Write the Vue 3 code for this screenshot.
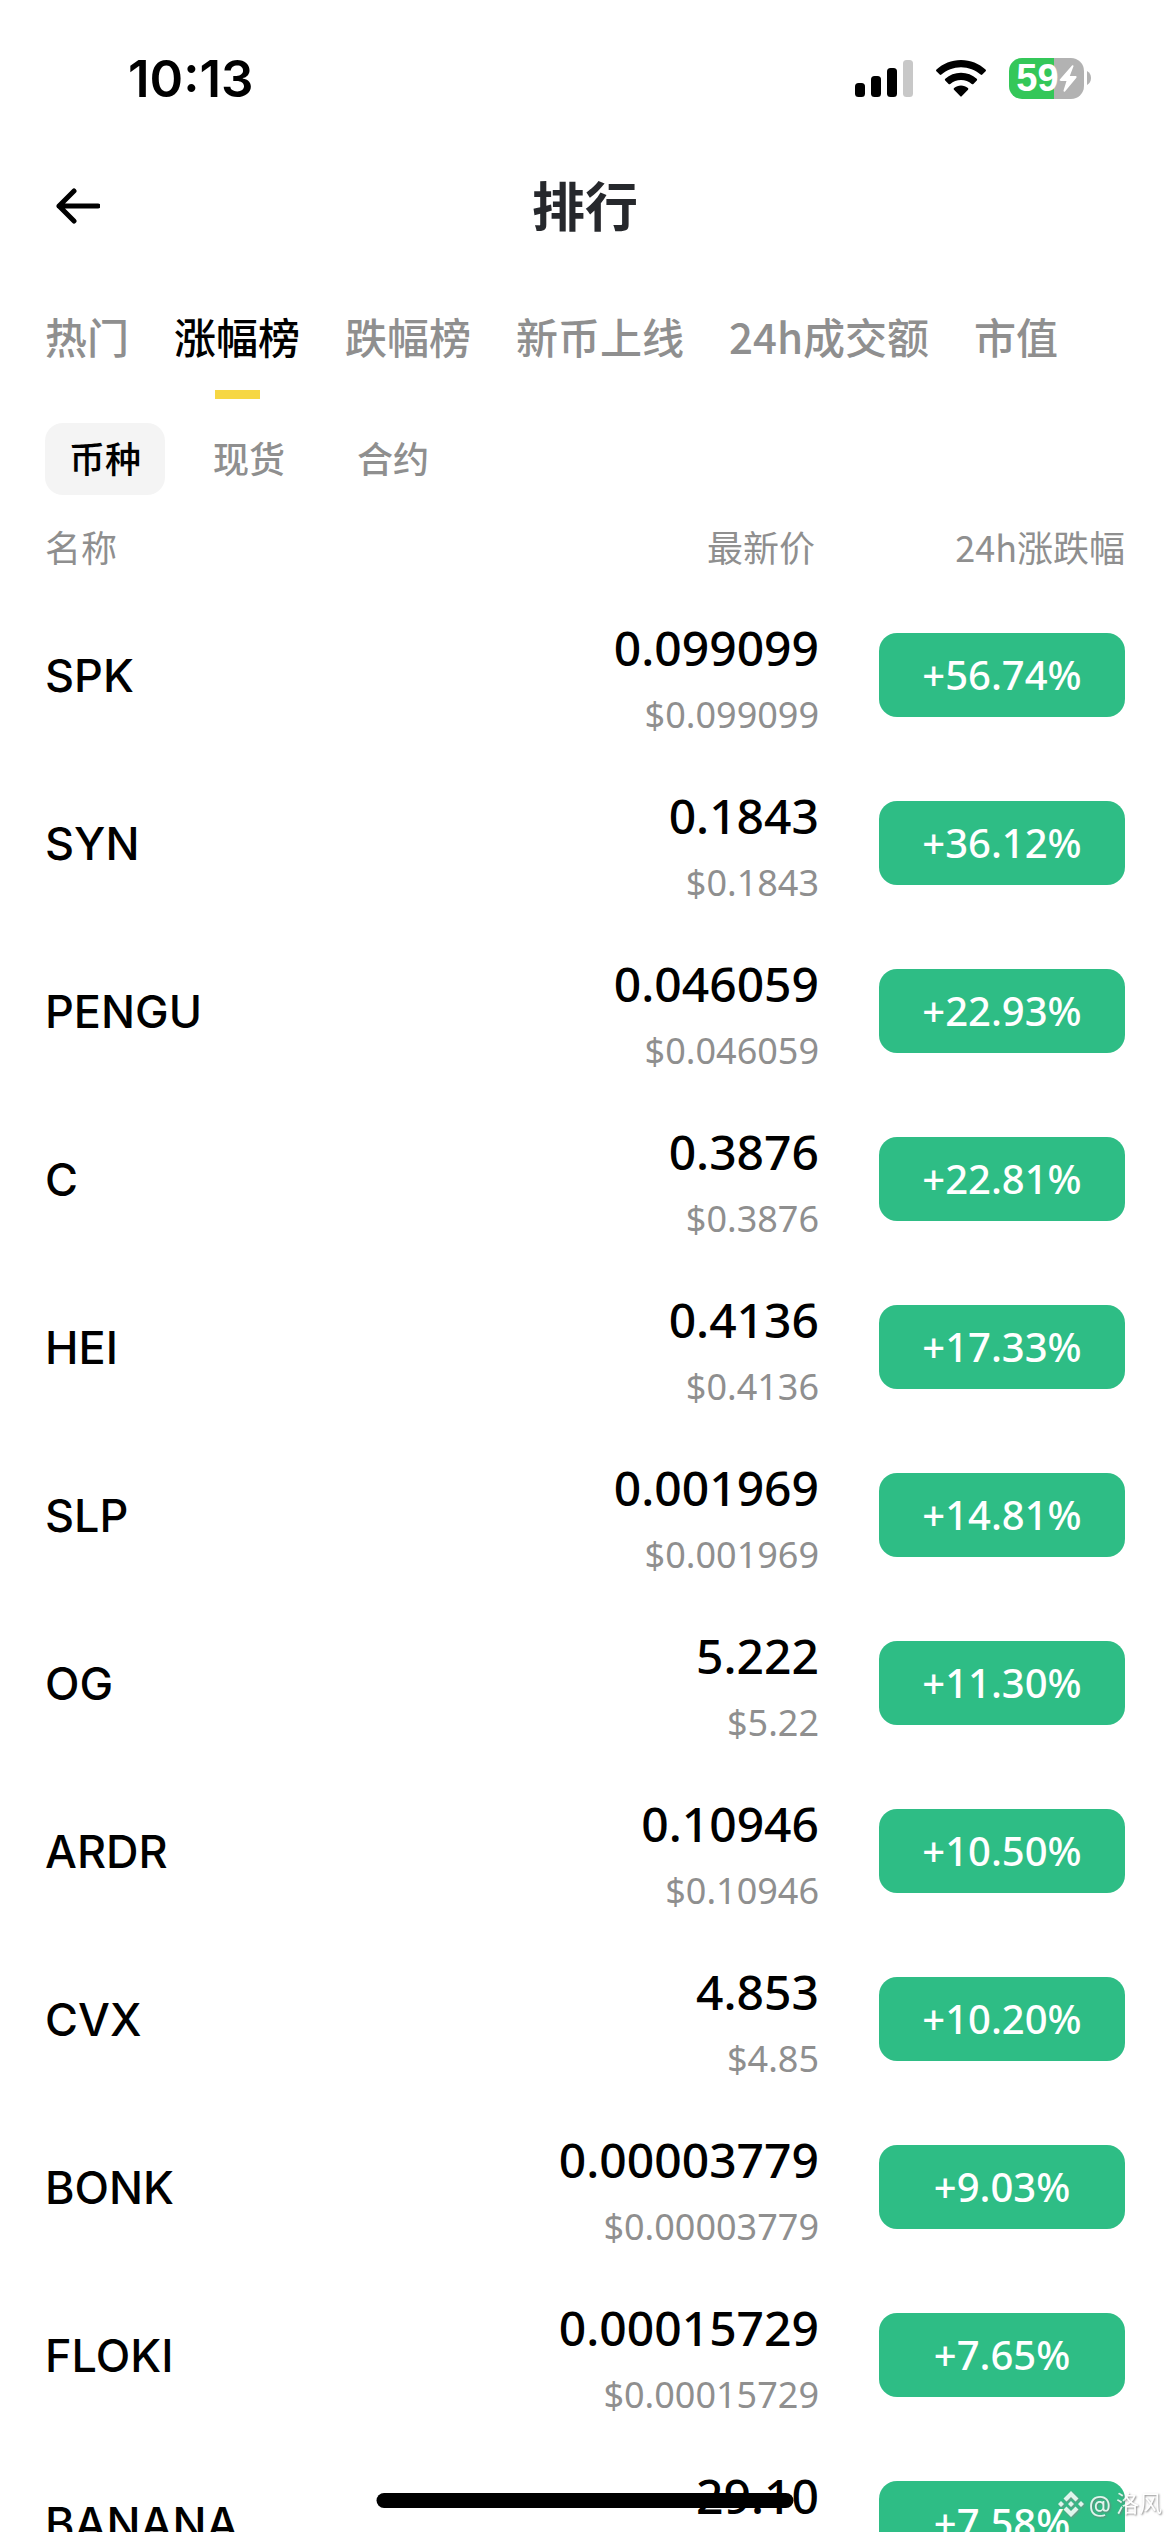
<script setup>
import { ref } from 'vue'

const tabs = ['热门', '涨幅榜', '跌幅榜', '新币上线', '24h成交额', '市值']
const activeTab = ref('涨幅榜')

const markets = ['币种', '现货', '合约']
const activeMarket = ref('币种')

const coins = [
  { name: 'SPK', price: '0.099099', usd: '$0.099099', change: '+56.74%' },
  { name: 'SYN', price: '0.1843', usd: '$0.1843', change: '+36.12%' },
  { name: 'PENGU', price: '0.046059', usd: '$0.046059', change: '+22.93%' },
  { name: 'C', price: '0.3876', usd: '$0.3876', change: '+22.81%' },
  { name: 'HEI', price: '0.4136', usd: '$0.4136', change: '+17.33%' },
  { name: 'SLP', price: '0.001969', usd: '$0.001969', change: '+14.81%' },
  { name: 'OG', price: '5.222', usd: '$5.22', change: '+11.30%' },
  { name: 'ARDR', price: '0.10946', usd: '$0.10946', change: '+10.50%' },
  { name: 'CVX', price: '4.853', usd: '$4.85', change: '+10.20%' },
  { name: 'BONK', price: '0.00003779', usd: '$0.00003779', change: '+9.03%' },
  { name: 'FLOKI', price: '0.00015729', usd: '$0.00015729', change: '+7.65%' },
  { name: 'BANANA', price: '29.10', usd: '$29.10', change: '+7.58%' },
]
</script>

<template>
  <div class="screen">
    <header class="status">
      <time class="clock">10:13</time>
      <div class="indicators">
        <svg class="signal" viewBox="0 0 58 37" aria-hidden="true">
          <rect x="0" y="23" width="10" height="14" rx="3.5" />
          <rect x="16" y="16" width="10" height="21" rx="3.5" />
          <rect x="32" y="8" width="10" height="29" rx="3.5" />
          <rect x="48" y="0" width="10" height="37" rx="3.5" fill="#c8c8c8" />
        </svg>
        <svg class="wifi" viewBox="0 0 50 37" aria-hidden="true">
          <path d="M25 0C15.500 0 6.900 3.600.500 9.500c-.6.600-.6 1.200-.1 1.800l3.300 3.300c.5.500 1.100.5 1.700 0C10.600 10 17.500 7.200 25 7.200S39.400 10 44.600 14.600c.6.500 1.200.5 1.700 0l3.300-3.300c.5-.6.5-1.200-.1-1.800C43.100 3.600 34.500 0 25 0Z" />
          <path d="M25 12.800c-6 0-11.500 2.200-15.700 5.900-.6.600-.6 1.200-.1 1.800l3.400 3.400c.5.500 1.100.5 1.700 0 2.900-2.500 6.600-4 10.700-4s7.800 1.500 10.700 4c.6.500 1.200.5 1.700 0l3.400-3.400c.5-.6.5-1.200-.1-1.800C36.500 15 31 12.800 25 12.800Z" />
          <path d="M25 25.500c-2.600 0-5 .9-6.900 2.500-.6.500-.6 1.200-.1 1.700l6.100 6.300c.6.700 1.200.7 1.800 0l6.100-6.300c.5-.5.5-1.200-.1-1.700-1.900-1.600-4.300-2.500-6.900-2.500Z" />
        </svg>
        <div class="battery">
          <div class="cell">
            <span class="level">59</span>
            <svg class="bolt" viewBox="0 0 18 27" aria-hidden="true">
              <path d="M13 .6 1 14.200c-.7.900-.3 1.800.8 1.800H7.500L4.600 25.300c-.4 1.300.7 1.900 1.600.9L17.200 13c.8-1 .3-1.900-.8-1.900h-5.600L14.400 1.600C14.900.4 13.900-.3 13 .6Z" fill="#fff" />
            </svg>
          </div>
          <svg class="nub" viewBox="0 0 4 14" aria-hidden="true">
            <path d="M0 0c2.500 1.300 4 4 4 7s-1.500 5.700-4 7Z" fill="#b2b2b2" />
          </svg>
        </div>
      </div>
    </header>

    <nav class="topbar">
      <button class="back" type="button" aria-label="返回">
        <svg viewBox="0 0 44 36" aria-hidden="true">
          <path d="M42 18H3M18 3 3 18l15 15" />
        </svg>
      </button>
      <h1>排行</h1>
    </nav>

    <div class="tabs" role="tablist">
      <button
        v-for="tab in tabs"
        :key="tab"
        type="button"
        role="tab"
        class="tab"
        :class="{ active: tab === activeTab }"
        :aria-selected="tab === activeTab"
        @click="activeTab = tab"
      >
        {{ tab }}
      </button>
    </div>

    <div class="chips">
      <button
        v-for="market in markets"
        :key="market"
        type="button"
        class="chip"
        :class="{ active: market === activeMarket }"
        @click="activeMarket = market"
      >
        {{ market }}
      </button>
    </div>

    <main class="list">
      <table>
        <thead>
          <tr>
            <th class="name" scope="col">名称</th>
            <th class="price" scope="col">最新价</th>
            <th class="change" scope="col">24h涨跌幅</th>
          </tr>
        </thead>
        <tbody>
          <tr v-for="coin in coins" :key="coin.name">
            <td class="name">{{ coin.name }}</td>
            <td class="price">
              <div class="last">{{ coin.price }}</div>
              <div class="usd">{{ coin.usd }}</div>
            </td>
            <td class="change"><span class="badge">{{ coin.change }}</span></td>
          </tr>
        </tbody>
      </table>
    </main>

    <div class="home-bar"></div>
    <div class="watermark">
      <svg viewBox="0 0 26 26" aria-hidden="true">
        <path d="m13 0 7.500 7.500-3 3L13 6l-4.500 4.500-3-3ZM3 10l3 3-3 3-3-3Zm10 0 3 3-3 3-3-3Zm10 0 3 3-3 3-3-3ZM8.500 15.500 13 20l4.500-4.500 3 3L13 26l-7.500-7.500Z" />
      </svg>
      <span>@</span>
      <span>洛风</span>
    </div>
  </div>
</template>

<style>
body {
  margin: 0;
  background: #fff;
}
</style>

<style scoped>
.screen {
  position: relative;
  display: flex;
  flex-direction: column;
  height: 100vh;
  overflow: hidden;
  background: #fff;
  color: #000;
  font-family: Inter, 'Noto Sans CJK SC', sans-serif;
}

button {
  padding: 0;
  border: 0;
  background: none;
  color: inherit;
  font: inherit;
  white-space: nowrap;
}

.status {
  display: flex;
  flex: none;
  align-items: center;
  justify-content: space-between;
  height: 156px;
  padding: 0 79px 0 128px;
}

.clock {
  font-size: 51px;
  font-weight: 600;
}

.indicators {
  display: flex;
  align-items: center;
  gap: 23px;
}

.signal {
  width: 58px;
  height: 37px;
}

.wifi {
  width: 50px;
  height: 37px;
}

.battery {
  display: flex;
  align-items: center;
  gap: 3px;
}

.cell {
  display: flex;
  align-items: center;
  justify-content: center;
  width: 75px;
  height: 41px;
  border-radius: 13px;
  background: linear-gradient(90deg, #34c759 60%, #b2b2b2 60%);
}

.level {
  color: #fff;
  font-family: 'Liberation Sans', sans-serif;
  font-size: 38px;
  font-weight: 700;
  line-height: 41px;
}

.bolt {
  width: 18px;
  height: 27px;
}

.nub {
  width: 4px;
  height: 14px;
}

.topbar {
  display: grid;
  flex: none;
  grid-template-columns: 1fr auto 1fr;
  align-items: center;
  height: 100px;
  padding: 0 56px;
}

.back {
  display: flex;
  width: 44px;
}

.back svg {
  width: 44px;
  height: 36px;
  fill: none;
  stroke: #000;
  stroke-width: 5;
  stroke-linecap: round;
  stroke-linejoin: round;
}

h1 {
  margin: 0;
  padding-bottom: 4px;
  color: #26282c;
  font-family: 'Noto Sans CJK SC', sans-serif;
  font-size: 53px;
  font-weight: 700;
  line-height: 76px;
}

.tabs,
.chips {
  display: flex;
  flex: none;
  padding: 0 45px;
  color: #8f8f8f;
  font-family: 'Noto Sans CJK SC', sans-serif;
  font-weight: 500;
}

.tabs {
  gap: 45px;
  padding-top: 50px;
}

.tab {
  display: flex;
  flex-direction: column;
  align-items: center;
  height: 93px;
  font-size: 42px;
  line-height: 60px;
}

.tab.active,
.chip.active {
  color: #000;
}

.tab.active::after {
  width: 45px;
  height: 9px;
  margin-top: auto;
  background: #f6d744;
  content: '';
}

.chips {
  gap: 24px;
  margin: 24px 0 8px;
}

.chip {
  height: 72px;
  padding: 0 24px 4px;
  border-radius: 18px;
  font-size: 36px;
}

.chip.active {
  background: #f4f4f4;
}

.list {
  flex: 1;
  min-height: 0;
  padding: 0 45px;
  overflow: hidden;
}

table {
  width: 100%;
  border-collapse: collapse;
}

th,
td {
  padding: 0;
  text-align: right;
}

th {
  height: 88px;
  color: #8f8f8f;
  font-family: 'Noto Sans CJK SC', sans-serif;
  font-size: 36px;
  font-weight: 400;
  line-height: 86px;
  vertical-align: top;
}

th.price {
  padding-right: 4px;
}

th.name,
td.name {
  text-align: left;
}

td {
  height: 168px;
}

td.name {
  font-size: 45px;
  font-weight: 500;
}

td.price {
  font-family: 'Noto Sans', sans-serif;
  vertical-align: top;
}

.last {
  padding-top: 26px;
  font-size: 48px;
  font-weight: 500;
  line-height: 62px;
}

.usd {
  color: #8f8f8f;
  font-size: 36px;
  line-height: 72px;
}

.change {
  width: 306px;
}

.badge {
  display: inline-block;
  width: 246px;
  border-radius: 18px;
  background: #2ebd85;
  color: #fff;
  font-family: 'Noto Sans', sans-serif;
  font-size: 40px;
  font-weight: 500;
  line-height: 84px;
  text-align: center;
  vertical-align: middle;
}

.home-bar {
  position: absolute;
  bottom: 24px;
  left: 50%;
  width: 417px;
  height: 15px;
  border-radius: 8px;
  background: #000;
  transform: translateX(-50%);
}

.watermark {
  position: absolute;
  right: 8px;
  bottom: 10px;
  display: flex;
  align-items: center;
  gap: 5px;
  color: #fff;
  font-size: 23px;
  line-height: 36px;
  opacity: 0.85;
  text-shadow: 1px 1px 2px #777;
}

.watermark svg {
  width: 26px;
  height: 26px;
  fill: #fff;
  filter: drop-shadow(1px 1px 1px #888);
}
</style>
